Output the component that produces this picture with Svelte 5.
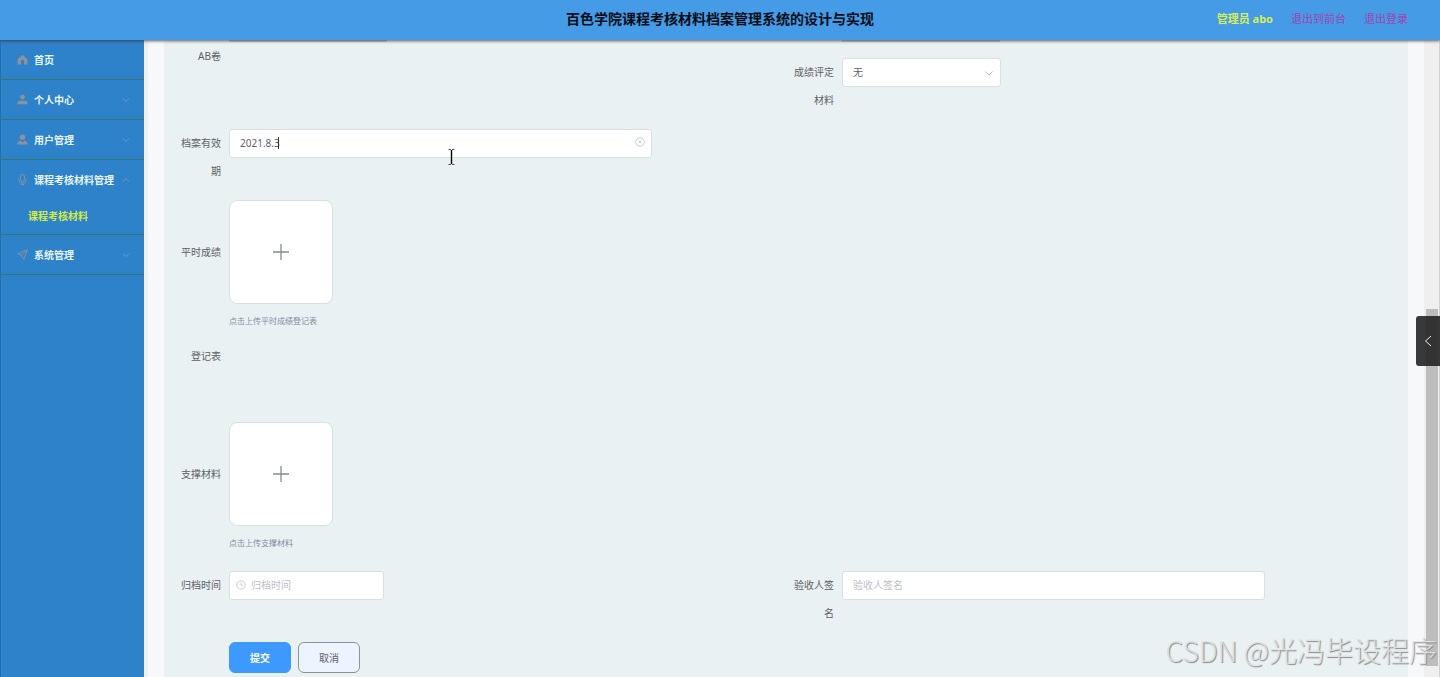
<script>
  const menus = [
    { title: '首页', icon: 'home' },
    { title: '个人中心', icon: 'user', children: [] },
    { title: '用户管理', icon: 'member', children: [] },
    { title: '课程考核材料管理', icon: 'mic', open: true, children: ['课程考核材料'] },
    { title: '系统管理', icon: 'send', children: [] }
  ];

  let grade = $state('无');
  let validity = $state('2021.8.3');
  let archiveTime = $state('');
  let signer = $state('');
</script>

{#snippet menuIcon(name)}
  <svg class="menu-icon" viewBox="0 0 12 12" aria-hidden="true">
    {#if name === 'home'}
      <path fill="currentColor" d="M6 .8.6 5.6V11.4h3.800V8.200a1.600 1.600 0 0 1 3.200 0V11.400h3.800V5.600Z" />
    {:else if name === 'user'}
      <circle cx="6" cy="3.4" r="2.700" fill="currentColor" />
      <path fill="currentColor" d="M.5 11.200V9.400Q.5 7.400 2.500 7.400h7q2 0 2 2V11.200Z" />
    {:else if name === 'member'}
      <circle cx="6" cy="3.6" r="3" fill="currentColor" />
      <path fill="currentColor" d="M.3 11.400q0-3.600 3.500-4.400L6 9l2.200-2q3.500.8 3.500 4.400Z" />
    {:else if name === 'mic'}
      <g fill="none" stroke="currentColor">
        <rect x="3.8" y="0.600" width="4.400" height="7.600" rx="2.200" />
        <path d="M1.800 5v1a4.200 4.200 0 0 0 8.400 0V5M6 10.200v1.300M4 11.500h4" />
      </g>
    {:else}
      <path fill="none" stroke="currentColor" d="M11.200.8.8 5.200l3.800 1.600L7.600 11.200ZM11.200.8 4.600 6.800" />
    {/if}
  </svg>
{/snippet}

<div class="app-shell">
  <header class="top-bar">
    <h1>百色学院课程考核材料档案管理系统的设计与实现</h1>
    <nav class="user-nav">
      <span class="user-name">管理员 abo</span>
      <a href="#front">退出到前台</a>
      <a href="#logout">退出登录</a>
    </nav>
  </header>

  <div class="body">
    <aside class="sidebar">
      {#each menus as menu}
        <div class="menu-group">
          <button type="button" class="menu-item">
            {@render menuIcon(menu.icon)}
            <span>{menu.title}</span>
            {#if menu.children}
              <svg class="arrow" class:open={menu.open} viewBox="0 0 8 8" aria-hidden="true">
                <path d="M1 2.500 4 5.500 7 2.500" fill="none" stroke="currentColor" />
              </svg>
            {/if}
          </button>
          {#if menu.open}
            {#each menu.children as child}
              <a class="sub-item" href="#exam">{child}</a>
            {/each}
          {/if}
        </div>
      {/each}
    </aside>

    <main class="content">
      <form class="panel" onsubmit={(e) => e.preventDefault()}>
        <div>
          <!-- bottom edge of the fields scrolled under the header -->
          <div class="row scrolled">
            <div class="edge"></div>
            <div class="edge"></div>
          </div>
          <div class="row">
            <div class="item">
              <span class="label">AB卷</span>
            </div>
            <div class="item lower">
              <label class="label" for="grade">成绩评定材料</label>
              <div class="field select-field">
                <select id="grade" bind:value={grade}>
                  <option>无</option>
                  <option>有</option>
                </select>
                <svg class="select-arrow" viewBox="0 0 8 8" aria-hidden="true">
                  <path d="M0.500 2.500 4 6 7.500 2.500" fill="none" stroke="currentColor" />
                </svg>
              </div>
            </div>
          </div>
        </div>

        <div class="row">
          <div class="item">
            <label class="label" for="validity">档案有效期</label>
            <div class="field">
              <input id="validity" type="text" bind:value={validity} />
              <span class="caret"></span>
              <button type="button" class="clear" aria-label="清空" onclick={() => (validity = '')}>
                <svg viewBox="0 0 10 10" aria-hidden="true">
                  <circle cx="5" cy="5" r="4.300" />
                  <path d="M3.600 3.600 6.400 6.400M6.400 3.600 3.600 6.400" />
                </svg>
              </button>
            </div>
          </div>
        </div>

        <div class="item upload-item">
          <span class="label">平时成绩登记表</span>
          <div class="upload">
            <button type="button" class="upload-card" aria-label="上传平时成绩登记表">
              <svg viewBox="0 0 16 16" aria-hidden="true"><path d="M8 0v16M0 8h16" /></svg>
            </button>
            <p class="tip">点击上传平时成绩登记表</p>
          </div>
        </div>

        <div class="item upload-item">
          <span class="label">支撑材料</span>
          <div class="upload">
            <button type="button" class="upload-card" aria-label="上传支撑材料">
              <svg viewBox="0 0 16 16" aria-hidden="true"><path d="M8 0v16M0 8h16" /></svg>
            </button>
            <p class="tip">点击上传支撑材料</p>
          </div>
        </div>

        <div class="row">
          <div class="item">
            <label class="label" for="archive">归档时间</label>
            <div class="field date-field">
              <input id="archive" type="text" placeholder="归档时间" bind:value={archiveTime} />
              <svg class="clock" viewBox="0 0 10 10" aria-hidden="true">
                <circle cx="5" cy="5" r="4.200" />
                <path d="M5 2.500v2.700h2.200" />
              </svg>
            </div>
          </div>
          <div class="item">
            <label class="label" for="signer">验收人签名</label>
            <div class="field">
              <input id="signer" type="text" placeholder="验收人签名" bind:value={signer} />
            </div>
          </div>
        </div>

        <div class="actions">
          <button type="submit" class="btn primary">提交</button>
          <button type="button" class="btn">取消</button>
        </div>
      </form>
    </main>

    <div class="scrollbar"><div class="thumb"></div></div>
  </div>

  <button type="button" class="drawer-toggle" aria-label="展开">
    <svg viewBox="0 0 8 12" aria-hidden="true"><path d="M7 1 1.500 6 7 11" /></svg>
  </button>

  <svg class="pointer" viewBox="0 0 7 16" aria-hidden="true">
    <path d="M0.500.500H3M4 .500h2.500M0.500 15.500H3M4 15.500h2.500" stroke="#555" />
    <path d="M3.500 1v14" stroke="#000" stroke-width="1.400" />
  </svg>

  <div class="watermark">CSDN @光冯毕设程序</div>
</div>

<style>
  :global(body) {
    margin: 0;
  }

  .app-shell {
    position: relative;
    display: flex;
    flex-direction: column;
    height: 100vh;
    overflow: hidden;
    font-family: 'Noto Sans', 'Noto Sans CJK SC', sans-serif;
    font-size: 10px;
    color: #606266;
  }

  button,
  input,
  select {
    box-sizing: border-box;
    margin: 0;
    font: inherit;
    color: inherit;
  }

  a {
    text-decoration: none;
  }

  /* Header */
  .top-bar {
    position: relative;
    z-index: 2;
    display: grid;
    grid-template-columns: 1fr auto 1fr;
    align-items: center;
    flex: none;
    height: 40px;
    padding: 0 32px;
    box-sizing: border-box;
    background: #459be5;
    box-shadow: 0 1px 3px rgba(60, 50, 50, 0.8);
  }

  h1 {
    grid-column: 2;
    margin: 0;
    font-size: 14px;
    font-weight: 700;
    line-height: 38px;
    color: #050d18;
  }

  .user-nav {
    display: flex;
    justify-content: flex-end;
    gap: 18px;
    font-size: 11px;
    line-height: 38px;
  }

  .top-bar {
    align-items: start;
  }

  .user-nav a {
    color: #a044b0;
  }

  .user-name {
    font-weight: 700;
    color: #d5ee58;
  }

  .body {
    display: flex;
    flex: 1;
    min-height: 0;
  }

  /* Sidebar */
  .sidebar {
    flex: none;
    width: 144px;
    background: #2d82c9;
    box-shadow: inset 1px 0 #276fab;
  }

  .menu-group {
    border-bottom: 1px solid #357a70;
  }

  .menu-item {
    display: flex;
    align-items: center;
    width: 100%;
    height: 39px;
    padding: 0 14px 0 17px;
    border: 0;
    background: none;
    font-weight: 700;
    color: #e8f6fd;
    text-align: left;
    white-space: nowrap;
  }

  .menu-icon {
    flex: none;
    width: 11px;
    height: 11px;
    margin-right: 6px;
    color: #8c929c;
  }

  .arrow {
    flex: none;
    width: 8px;
    height: 8px;
    margin-left: auto;
    color: #6f9cc4;
  }

  .arrow.open {
    transform: rotate(180deg);
  }

  .sub-item {
    display: block;
    padding-left: 28px;
    font-weight: 700;
    line-height: 35px;
    color: #d4ea45;
  }

  /* Form */
  .content {
    display: flex;
    flex: 1;
    min-width: 0;
    padding: 0 16px;
    border-left: 4px solid #efefef;
    background: #f6f8fa;
  }

  .panel {
    display: flex;
    flex: 1;
    flex-direction: column;
    gap: 14px;
    min-width: 0;
    padding: 0 9px;
    background: #e9f1f3;
  }

  .row {
    display: grid;
    grid-template-columns: 1fr 1fr;
    min-height: 57px;
  }

  .row.scrolled {
    min-height: 2px;
  }

  .edge {
    width: 158px;
    height: 2px;
    margin-left: 56px;
    background: #c4c8cc;
  }

  .item {
    display: flex;
    align-items: flex-start;
    min-width: 0;
  }

  .lower {
    padding: 16px 0 1px;
  }

  .label {
    flex: none;
    width: 56px;
    padding: 0 8px;
    box-sizing: border-box;
    line-height: 28px;
    text-align: right;
  }

  .field {
    position: relative;
    width: 69%;
  }

  .select-field {
    width: 159px;
    flex: none;
  }

  .date-field {
    width: 155px;
    flex: none;
  }

  input,
  select {
    display: block;
    width: 100%;
    height: 29px;
    padding: 0 10px 1px;
    border: 1px solid #dadfe5;
    border-radius: 3px;
    outline: 0;
    background: #fff;
    appearance: none;
  }

  .date-field input {
    padding-left: 21px;
  }

  input::placeholder {
    color: #bcc0c8;
    opacity: 1;
  }

  .select-arrow {
    position: absolute;
    top: 11px;
    right: 8px;
    width: 8px;
    height: 8px;
    color: #b3b7bf;
    pointer-events: none;
  }

  .caret {
    position: absolute;
    top: 8px;
    left: 49px;
    width: 1px;
    height: 12px;
    background: #333;
  }

  .clear {
    position: absolute;
    top: 8px;
    right: 7px;
    width: 10px;
    height: 10px;
    padding: 0;
    border: 0;
    background: none;
  }

  .clear svg,
  .clock {
    display: block;
    width: 10px;
    height: 10px;
    fill: none;
    stroke: #bcc0c8;
    stroke-width: 0.8;
  }

  .clock {
    position: absolute;
    top: 9px;
    left: 7px;
  }

  .upload-item .label {
    line-height: 104px;
  }

  .upload-card {
    display: flex;
    align-items: center;
    justify-content: center;
    width: 104px;
    height: 104px;
    padding: 0;
    border: 1px solid #d9e0e4;
    border-radius: 8px;
    background: #fff;
  }

  .upload-card svg {
    width: 16px;
    height: 16px;
    fill: none;
    stroke: #858a93;
    stroke-width: 1.3;
  }

  .tip {
    margin: 3px 0 0;
    font-size: 8px;
    line-height: 28px;
    color: #858da0;
  }

  .actions {
    display: flex;
    gap: 7px;
    padding-left: 56px;
  }

  .btn {
    width: 62px;
    height: 31px;
    padding: 0;
    border: 1px solid #8d939b;
    border-radius: 6px;
    background: #ecf4ff;
  }

  .btn.primary {
    border-color: #3d99fd;
    background: #3d99fd;
    font-weight: 700;
    color: #fff;
  }

  /* Page scrollbar */
  .scrollbar {
    display: flex;
    flex: none;
    flex-direction: column;
    justify-content: flex-end;
    width: 15px;
    padding-bottom: 11px;
    border-right: 1px solid #d2d2d2;
    background: #efefef;
  }

  .thumb {
    height: 57%;
    margin: 0 1px 0 2px;
    background: #bdbdbd;
  }

  .drawer-toggle {
    position: absolute;
    z-index: 3;
    top: 316px;
    right: 0;
    width: 24px;
    height: 50px;
    padding: 0;
    border: 0;
    border-radius: 3px 0 0 3px;
    background: rgba(35, 35, 35, 0.9);
  }

  .drawer-toggle svg {
    display: block;
    width: 8px;
    height: 12px;
    margin: 0 auto;
    fill: none;
    stroke: #eee;
  }

  .pointer {
    position: absolute;
    top: 149px;
    left: 448px;
    width: 7px;
    height: 16px;
    fill: none;
    pointer-events: none;
  }

  .watermark {
    position: absolute;
    z-index: 4;
    right: 3px;
    bottom: 6px;
    font-family: 'Noto Sans CJK SC', sans-serif;
    font-size: 28px;
    font-weight: 300;
    line-height: 42px;
    color: rgba(225, 227, 229, 0.9);
    text-shadow: 1px 1px 1px #888;
    white-space: nowrap;
    pointer-events: none;
  }
</style>
